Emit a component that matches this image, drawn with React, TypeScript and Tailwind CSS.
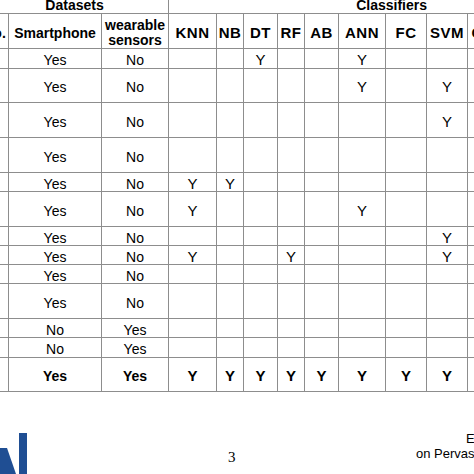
import React from 'react';

const FONT = "font-['Liberation_Sans',Arial,sans-serif]";

const CLASSIFIERS = ['KNN', 'NB', 'DT', 'RF', 'AB', 'ANN', 'FC', 'SVM', 'CNN', 'LSTM', 'Other'];
const WIDTHS = [28, 93, 67, 48, 27, 34, 27, 34, 47, 41, 41, 42, 50, 55];

type Row = { h: string; phone: string; wear: string; y: string[]; bold?: boolean };

const ROWS: Row[] = [
  { h: 'h-[20px]', phone: 'Yes', wear: 'No', y: ['DT', 'ANN'] },
  { h: 'h-[34px]', phone: 'Yes', wear: 'No', y: ['ANN', 'SVM'] },
  { h: 'h-[35px]', phone: 'Yes', wear: 'No', y: ['SVM'] },
  { h: 'h-[35px]', phone: 'Yes', wear: 'No', y: [] },
  { h: 'h-[19px]', phone: 'Yes', wear: 'No', y: ['KNN', 'NB'] },
  { h: 'h-[35px]', phone: 'Yes', wear: 'No', y: ['KNN', 'ANN'] },
  { h: 'h-[19px]', phone: 'Yes', wear: 'No', y: ['SVM'] },
  { h: 'h-[19px]', phone: 'Yes', wear: 'No', y: ['KNN', 'RF', 'SVM'] },
  { h: 'h-[19px]', phone: 'Yes', wear: 'No', y: [] },
  { h: 'h-[35px]', phone: 'Yes', wear: 'No', y: [] },
  { h: 'h-[19px]', phone: 'No', wear: 'Yes', y: [] },
  { h: 'h-[20px]', phone: 'No', wear: 'Yes', y: [] },
  { h: 'h-[34px]', phone: 'Yes', wear: 'Yes', y: ['KNN', 'NB', 'DT', 'RF', 'AB', 'ANN', 'FC', 'SVM'], bold: true },
];

const cell = 'border border-[#8d8d8d] p-0 text-center';
const body = 'pt-[4px] leading-[14px] text-[14px]';

export default function App() {
  return (
    <div className={`w-[474px] h-[474px] overflow-hidden bg-white text-black ${FONT}`}>
      <table className="ml-[-20px] table-fixed border-collapse" style={{ width: 634 }}>
        <colgroup>
          {WIDTHS.map((w, i) => <col key={i} style={{ width: w }} />)}
        </colgroup>
        <thead>
          <tr className="h-[13px]">
            <th colSpan={3} className="border-x border-b border-[#8d8d8d] p-0 align-top text-[14px] leading-[11px] font-bold">Datasets</th>
            <th colSpan={11} className="border-x border-b border-[#8d8d8d] p-0 align-top text-[14px] leading-[11px] font-bold">Classifiers</th>
          </tr>
          <tr className="h-[35px]">
            <th className={`${cell} pt-[4px] text-[14px] leading-[14px] font-bold`}>No.</th>
            <th className={`${cell} pt-[4px] text-[14px] leading-[14px] font-bold`}>Smartphone</th>
            <th className={`${cell} pt-[4px] text-[14px] leading-[15px] font-bold`}>wearable<br />sensors</th>
            {CLASSIFIERS.map(c => (
              <th key={c} className={`${cell} pt-[4px] text-[15px] leading-[14px] font-bold tracking-[0.5px]`}>{c}</th>
            ))}
          </tr>
        </thead>
        <tbody>
          {ROWS.map((r, i) => (
            <tr key={i} className={r.h}>
              <td className={`${cell} ${body}`}></td>
              <td className={`${cell} ${body} ${r.bold ? 'font-bold' : ''}`}>{r.phone}</td>
              <td className={`${cell} ${body} ${r.bold ? 'font-bold' : ''}`}>{r.wear}</td>
              {CLASSIFIERS.map(c => (
                <td key={c} className={`${cell} pt-[4px] leading-[14px] text-[15px] ${r.bold ? 'font-bold' : ''}`}>
                  {r.y.includes(c) ? 'Y' : ''}
                </td>
              ))}
            </tr>
          ))}
        </tbody>
      </table>

      <div className="flex h-[82px]">
        <div className="w-[228px] flex items-end">
          <svg width="30" height="41" viewBox="0 0 30 41" className="block">
            <polygon points="0,15 7,15 16,41 0,41" fill="#1f4e93" />
            <rect x="19" y="0" width="8" height="41" fill="#1f4e93" />
          </svg>
        </div>
        <div className="w-[188px] pt-[58px] font-['Liberation_Serif','Times_New_Roman',serif] text-[15px] leading-[14px]">3</div>
        <div className="flex-1 min-w-0 pt-[39px] text-[13px] leading-[15px] whitespace-nowrap">
          <div className="pl-[50px]">EAI Endorsed Transactions</div>
          <div>on Pervasive Health and Technology</div>
        </div>
      </div>
    </div>
  );
}
